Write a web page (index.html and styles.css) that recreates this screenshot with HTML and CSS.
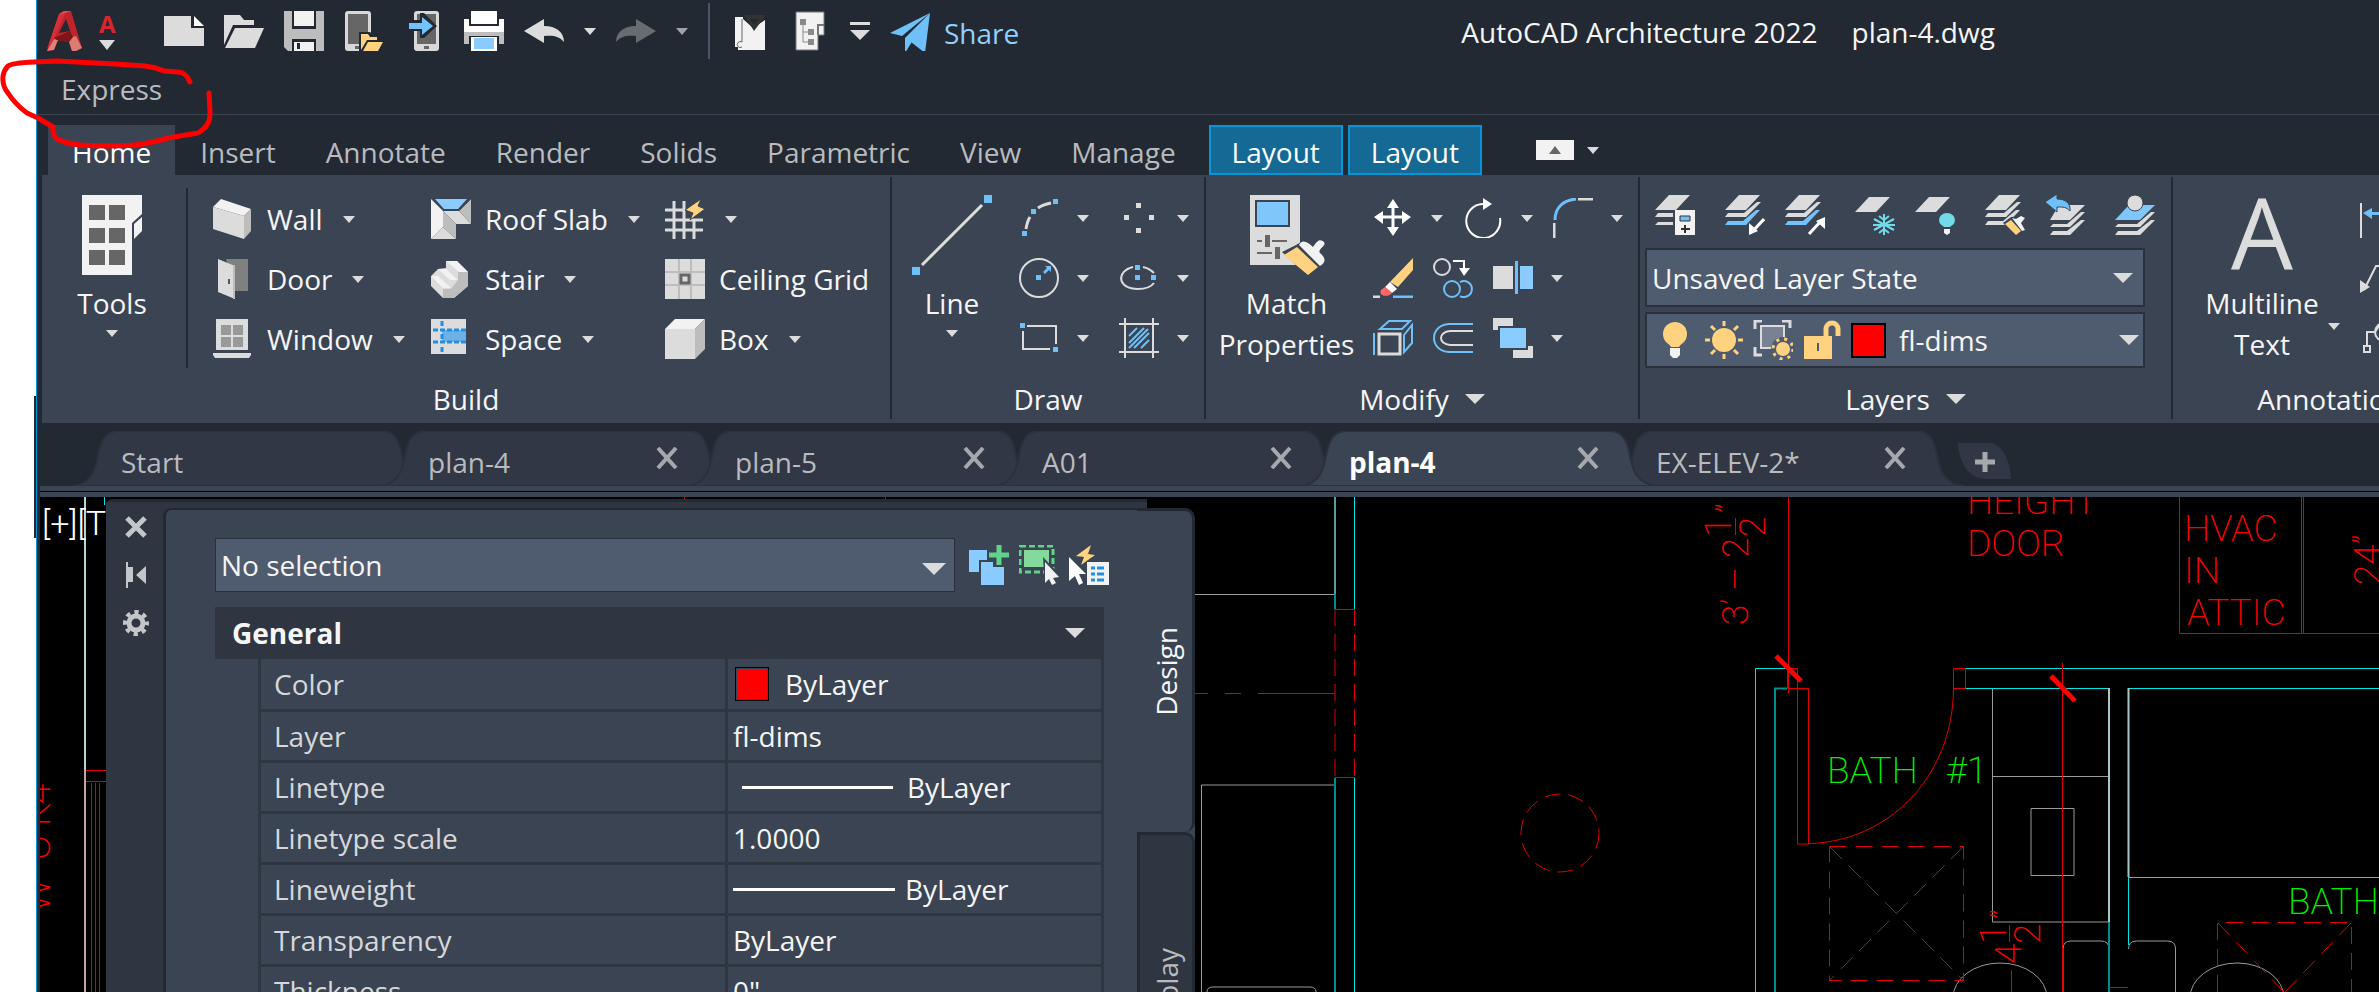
FILE: index.html
```html
<!DOCTYPE html>
<html lang="en">
<head>
    <meta charset="UTF-8">
    <meta name="viewport" content="width=device-width, initial-scale=1.0">
    <title>AutoCAD Architecture 2022 - plan-4.dwg</title>
    <link rel="stylesheet" href="styles.css">
</head>
<body>

    <div class="app">
        <!-- Quick access toolbar -->
        <header class="titlebar">
            <button class="logo-btn" aria-label="Application menu">
                <svg class="logo" viewBox="0 0 36 40"><path d="M0 40 12 3 17 0h7l11 37-6 3h-4l-3-9-12-2-4 10z" fill="#c0232b"/><path d="M12 22l7-14 4 12z" fill="#222933"/><path d="M12 3l5-3h7l-8 3z" fill="#e8494c"/><path d="M0 40l7-12 4 1-4 10z" fill="#e28079"/><path d="M22 31l3-5 4-1 6 12-6 3h-4z" fill="#dc7a74"/><path d="M7 27l16-7 3 6-4 5-12-2z" fill="#7d1519"/><path d="M12 3h6L6 30 0 38z" fill="#d8303a"/></svg>
                <span class="logo-small"><b>A</b><i class="caret caret-md"></i></span>
            </button>
            <button class="icon-btn" aria-label="New"><svg viewBox="0 0 40 40"><path d="M0 5h27v12h13v18H0z" fill="#dcdcdc"/><path d="M30 5l10 10H30z" fill="#fff"/></svg></button>
            <button class="icon-btn" aria-label="Open"><svg viewBox="0 0 40 40"><path d="M0 4h16l4 5h10v5H9L0 34z" fill="#dcdcdc"/><path d="M11 17h29l-9 20H1z" fill="#dcdcdc"/></svg></button>
            <button class="icon-btn" aria-label="Save"><svg viewBox="0 0 40 40"><path d="M0 0h40v40H4l-4-4z" fill="#bdbdbd"/><path d="M8 0h24v18H8zM8 28h24v12H8z" fill="#222933"/><path d="M10 0h20v15H10zM10 31h20v9H10z" fill="#f2f2f2"/><path d="M13 32h3v6h-3z" fill="#222933"/></svg></button>
            <button class="icon-btn" aria-label="Open from web"><svg viewBox="0 0 40 40"><rect x="1" width="26" height="40" rx="3" fill="#d9d9d9"/><path d="M4 3h20v30H4z" fill="#666"/><path d="M11 35h5v3h-5z" fill="#666"/><path d="M15 40V21h11l3 3h6v5h3l-5 11z" fill="#222933"/><path d="M17 23h7l2 3h7v3H23l-6 10z" fill="#ffd27f"/><path d="M24 31h15l-5 9H19z" fill="#ffd27f"/></svg></button>
            <button class="icon-btn" aria-label="Save to web"><svg viewBox="0 0 40 40"><rect x="10" width="25" height="40" rx="3" fill="#d9d9d9"/><path d="M13 3h19v30H13z" fill="#666"/><path d="M3 9h13V2h4l13 13-13 12h-4v-7H3z" fill="#222933"/><path d="M5 12h13V6l11 9-11 9v-6H5z" fill="#73c2fb"/><path d="M20 35h5v3h-5z" fill="#666"/></svg></button>
            <button class="icon-btn" aria-label="Plot"><svg viewBox="0 0 40 40"><path d="M7 0h26v13H7z" fill="#fff"/><path d="M0 8h5v7h30V8h5v13H0z" fill="#fff"/><path d="M0 21h40v12h-5v-8H5v8H0z" fill="#bdbdbd"/><path d="M7 26h26v14H7z" fill="#fff"/><path d="M10 27h20v11H10z" fill="#8accff"/></svg></button>
            <button class="icon-btn" aria-label="Undo"><svg viewBox="0 0 40 40"><path d="M0 20L20 8v7c12 0 20 6 20 16-5-6-11-7-20-6v7z" fill="#dcdcdc"/></svg></button>
            <i class="caret"></i>
            <button class="icon-btn" aria-label="Redo"><svg viewBox="0 0 40 40"><path d="M40 20L20 8v7C8 15 0 21 0 31c5-6 11-7 20-6v7z" fill="#686b70"/></svg></button>
            <i class="caret dim"></i>
            <span class="bar-sep"></span>
            <button class="icon-btn" aria-label="Project navigator"><svg viewBox="0 0 40 40"><path d="M5 6h8v30H5zM13 8l10 9 12-8v30H8V30h5z" fill="#f2f2f2"/><path d="M14 4h22L24 20z" fill="#333"/><path d="M20 8h9l-5 6z" fill="#222933"/><path d="M12 8v23a3 3 0 1 0 0 5" fill="none" stroke="#666"/></svg></button>
            <button class="icon-btn" aria-label="Project browser"><svg viewBox="0 0 40 40"><path d="M6 1h28v23h-6v15H6z" fill="#f2f2f2" stroke="#777"/><path d="M28 24V14h6" fill="none" stroke="#777" stroke-width="2"/><path d="M10 8h6v6h-6zM18 18h6v6h-6zM18 28h6v6h-6z" fill="#8a8a8a"/><path d="M13 14v17h5M13 21h5" fill="none" stroke="#8a8a8a"/></svg></button>
            <button class="more-btn" aria-label="Customize"><span></span><i class="caret caret-lg"></i></button>
            <button class="share-btn"><svg viewBox="0 0 40 40"><path d="M0 22L40 2 12 25zM15 27L40 2 15 42zM21 31L40 2 35 42z" fill="#6fc0f8"/></svg><span>Share</span></button>
            <div class="title"><span>AutoCAD Architecture 2022</span><span>plan-4.dwg</span></div>
        </header>
        <nav class="menubar"><a href="#">Express</a></nav>

        <!-- Ribbon tabs -->
        <nav class="tabs">
            <a href="#" class="active">Home</a>
            <a href="#">Insert</a>
            <a href="#">Annotate</a>
            <a href="#">Render</a>
            <a href="#">Solids</a>
            <a href="#">Parametric</a>
            <a href="#">View</a>
            <a href="#">Manage</a>
            <div class="context-tabs">
                <a href="#">Layout</a>
                <a href="#">Layout</a>
            </div>
            <button class="minimize" aria-label="Minimize ribbon"><span></span><i class="caret"></i></button>
        </nav>

        <!-- Ribbon panels -->
        <main class="ribbon">
            <section class="panel">
                <div class="panel-body">
                    <button class="big tools"><svg viewBox="0 0 80 80"><path d="M10 0h60v19l-10 9v52H10z" fill="#f2f2f2"/><path d="M62 29l8-7v14l-8 8z" fill="#f2f2f2"/><path d="M17 10h16v15H17zM37 10h16v15H37zM17 33h16v15H17zM37 33h16v15H37zM17 55h16v15H17zM37 55h16v15H37z" fill="#666"/></svg>Tools<i class="caret"></i></button>
                    <span class="inner-sep"></span>
                    <div class="build-grid">
                        <button class="tool"><svg viewBox="0 0 40 40"><path d="M0 8L8 0l30 10-7 7z" fill="#f2f2f2"/><path d="M0 8l31 9v23L0 30z" fill="#dcdcdc"/><path d="M31 17l7-7v22l-7 8z" fill="#bdbdbd"/></svg>Wall<i class="caret"></i></button>
                        <button class="tool"><svg viewBox="0 0 40 40"><path d="M0 0l12 12v16L0 40z" fill="#f2f2f2"/><path d="M12 28l13 12H0z" fill="#dcdcdc"/><path d="M12 12h16l12 13H25z" fill="#dcdcdc"/><path d="M12 12l13 13v15L12 28z" fill="#bdbdbd"/><path d="M40 0v25L28 12z" fill="#bdbdbd"/><path d="M1 0h39L28 12H13z" fill="#3b4453"/><path d="M4 0h32l-9 10H13z" fill="#8accff"/></svg>Roof Slab<i class="caret"></i></button>
                        <button class="tool" aria-label="Column grid"><svg viewBox="0 0 40 40"><path d="M9 2v38M19 2v38M29 20v20M0 11h18M0 21h38M0 31h38" stroke="#dcdcdc" stroke-width="3"/><path d="M36 0L20 11l8 3-3 7 15-11-7-3z" fill="#ffd27f" stroke="#3b4453"/></svg><i class="caret"></i></button>
                        <button class="tool"><svg viewBox="0 0 40 40"><path d="M13 0h22v32H22z" fill="#808080"/><path d="M5 0l17 7v33L5 33z" fill="#dcdcdc"/><path d="M20 6h2v34h-2z" fill="#bdbdbd"/><path d="M15 20h2v5h-2z" fill="#555"/></svg>Door<i class="caret"></i></button>
                        <button class="tool"><svg viewBox="0 0 40 40"><path d="M15 2h11l11 11v14L23 39H12L0 27V17l7-7 8-1z" fill="#dcdcdc"/><path d="M37 13v14L23 39H12v-9h8l7-9v-8z" fill="#bdbdbd"/><path d="M15 2h11l11 11h-9zM7 10h8l12 11h-8zM0 17h7l13 12h-8z" fill="#f2f2f2"/></svg>Stair<i class="caret"></i></button>
                        <button class="tool"><svg viewBox="0 0 40 40"><path d="M0 0h40v40H0z" fill="#dcdcdc"/><path d="M14 0v40M26 0v40M0 13h40M0 26h40" stroke="#bdbdbd" stroke-width="2"/><path d="M16 16h8v8h-8z" fill="#dcdcdc" stroke="#666" stroke-width="3"/></svg>Ceiling Grid</button>
                        <button class="tool"><svg viewBox="0 0 40 40"><path d="M3 0h32v31H3zM0 34h38v2l-2 3H2l-2-3z" fill="#dcdcdc"/><path d="M8 6h10v10H8zM20 6h10v10H20zM8 18h10v10H8zM20 18h10v10H20z" fill="#999"/></svg>Window<i class="caret"></i></button>
                        <button class="tool"><svg viewBox="0 0 40 40"><path d="M0 0h35v35H0z" fill="#dcdcdc"/><path d="M11 11h24v12H11z" fill="#6db1e6"/><path d="M2 11h33M2 23h33" stroke="#1f8fe6" stroke-width="3" stroke-dasharray="5 2"/><path d="M11 2v31" stroke="#1f8fe6" stroke-width="3" stroke-dasharray="5 8"/></svg>Space<i class="caret"></i></button>
                        <button class="tool"><svg viewBox="0 0 40 40"><path d="M0 10L10 0h30L30 10z" fill="#f2f2f2"/><path d="M0 10h30v30H0z" fill="#dcdcdc"/><path d="M30 10L40 0v30L30 40z" fill="#bdbdbd"/></svg>Box<i class="caret"></i></button>
                    </div>
                </div>
                <h2>Build</h2>
            </section>

            <section class="panel">
                <div class="panel-body">
                    <button class="big line"><svg viewBox="0 0 80 80"><path d="M10 70L70 10" stroke="#dcdcdc" stroke-width="3"/><path d="M0 72h8v8H0zM72 0h8v8h-8z" fill="#6fc0f8"/></svg>Line<i class="caret"></i></button>
                    <div class="draw-grid">
                        <button class="tool" aria-label="Arc"><svg viewBox="0 0 40 40"><path d="M7 31C8 25 9 22 11 19M19 10C23 7 27 6 32 5" fill="none" stroke="#dcdcdc" stroke-width="3"/><path d="M3 33h5v5H3zM12 11h5v5h-5zM34 1h5v5h-5z" fill="#6fc0f8"/></svg><i class="caret"></i></button>
                        <button class="tool" aria-label="Point"><svg viewBox="0 0 40 40"><path d="M17 5h5v5h-5zM5 17h5v5H5zM30 17h5v5h-5zM17 30h5v5h-5z" fill="#dcdcdc"/></svg><i class="caret"></i></button>
                        <button class="tool" aria-label="Circle"><svg viewBox="0 0 40 40"><circle cx="20" cy="20" r="19" fill="none" stroke="#dcdcdc" stroke-width="2"/><path d="M17 17h5v5h-5zM24 14l4-4-2-2h6v6l-2-2-4 4z" fill="#6fc0f8"/></svg><i class="caret"></i></button>
                        <button class="tool" aria-label="Ellipse"><svg viewBox="0 0 40 40"><path d="M14 9C-3 13-2 31 19 31c8 0 13-2 16-6M24 9c5 1 8 3 11 6" fill="none" stroke="#dcdcdc" stroke-width="2"/><path d="M16 7h5v5h-5zM16 17h5v5h-5zM32 17h5v5h-5z" fill="#6fc0f8"/></svg><i class="caret"></i></button>
                        <button class="tool" aria-label="Rectangle"><svg viewBox="0 0 40 40"><path d="M8 8h29v18M31 31H4V13" fill="none" stroke="#dcdcdc" stroke-width="2"/><path d="M1 5h5v5H1zM34 29h5v5h-5z" fill="#6fc0f8"/></svg><i class="caret"></i></button>
                        <button class="tool" aria-label="Hatch"><svg viewBox="0 0 40 40"><path d="M6 0v40M34 0v40M0 6h40M0 34h40" stroke="#dcdcdc" stroke-width="2"/><path d="M10 18l8-8M10 25l15-15M10 30l19-19M15 30l15-15M22 30l8-8" stroke="#6fc0f8" stroke-width="2"/></svg><i class="caret"></i></button>
                    </div>
                </div>
                <h2>Draw</h2>
            </section>

            <section class="panel">
                <div class="panel-body">
                    <button class="big match"><svg viewBox="0 0 80 80"><path d="M3 0h50v70H3z" fill="#dcdcdc"/><path d="M9 6h33v25H9z" fill="#7fc6fb" stroke="#3b4453" stroke-width="2"/><path d="M10 46h5M25 46h15M10 58h15" stroke="#666" stroke-width="2"/><path d="M18 40h5v12h-5zM28 52h5v12h-5z" fill="#666"/><path d="M35 57l14-7 12-7 18 4v22L62 82z" fill="#3b4453"/><path d="M37 60l13-8 21 20-10 8z" fill="#ffd27f"/><path d="M52 50c3-6 8-4 14 2 6-9 8-7 11-5 3 4-7 7-4 11 7 6 5 10 0 13z" fill="#f2f2f2"/></svg><span>Match</span><span>Properties</span></button>
                    <div class="modify-rows">
                        <div class="tool-row">
                            <button class="tool" aria-label="Move"><svg viewBox="0 0 40 40"><path d="M7 19h26M20 7v26" stroke="#fff" stroke-width="3"/><path d="M20 1l6 9H14zM20 38l6-9H14zM1 19l9-6v13zM38 19l-9-6v13z" fill="#fff"/></svg><i class="caret"></i></button>
                            <button class="tool" aria-label="Rotate"><svg viewBox="0 0 40 40"><path d="M20 6A17 17 0 1 0 37 20" fill="none" stroke="#fff" stroke-width="2"/><path d="M20 0l9 6-9 6z" fill="#fff"/></svg><i class="caret"></i></button>
                            <button class="tool" aria-label="Fillet"><svg viewBox="0 0 40 40"><path d="M2 22C2 9 11 2 23 1" fill="none" stroke="#6fc0f8" stroke-width="3"/><path d="M25 1h15M1 25v15" stroke="#dcdcdc" stroke-width="3"/></svg><i class="caret"></i></button>
                        </div>
                        <div class="tool-row">
                            <button class="tool" aria-label="Erase"><svg viewBox="0 0 40 40"><path d="M17 24L40 0v12L25 29z" fill="#ffd27f"/><path d="M12 29l5-5 7 7-5 4z" fill="#fff"/><path d="M8 32l4-3 7 6c-4 5-14 3-11-3z" fill="#f66"/><path d="M0 39h7" stroke="#dcdcdc" stroke-width="3"/><path d="M20 39h20" stroke="#6fc0f8" stroke-width="3"/></svg></button>
                            <button class="tool" aria-label="Copy"><svg viewBox="0 0 40 40"><circle cx="9" cy="9" r="8" fill="none" stroke="#dcdcdc" stroke-width="2"/><path d="M20 3h11v9" fill="none" stroke="#fff" stroke-width="2"/><path d="M26 10h11l-6 8z" fill="#fff"/><circle cx="19" cy="31" r="8" fill="none" stroke="#6fc0f8" stroke-width="2"/><path d="M27 24a8 8 0 1 1 0 14" fill="none" stroke="#6fc0f8" stroke-width="2"/></svg></button>
                            <button class="tool" aria-label="Mirror"><svg viewBox="0 0 40 40"><path d="M0 8h20v23H0z" fill="#dcdcdc"/><path d="M22 3h3v33h-3z" fill="#6fc0f8"/><path d="M27 8h13v23H27z" fill="#8accff"/></svg><i class="caret"></i></button>
                        </div>
                        <div class="tool-row">
                            <button class="tool" aria-label="Explode"><svg viewBox="0 0 40 40"><path d="M6 16h21v20H6z" fill="none" stroke="#dcdcdc" stroke-width="3"/><path d="M7 11l9-8h21l-8 8zM31 17l8-10v18l-8 9zM1 15v22" fill="none" stroke="#6fc0f8" stroke-width="2"/></svg></button>
                            <button class="tool" aria-label="Offset"><svg viewBox="0 0 40 40"><path d="M40 6H16C-4 7-4 33 16 34h24" fill="none" stroke="#6fc0f8" stroke-width="2"/><path d="M40 13H17c-12 1-12 13 0 14h23" fill="none" stroke="#dcdcdc" stroke-width="2"/></svg></button>
                            <button class="tool" aria-label="Draw order"><svg viewBox="0 0 40 40"><path d="M0 0h20v8H5v4H0zM40 40H20v-8h15v-4h5z" fill="#dcdcdc"/><path d="M7 10h26v20H7z" fill="#8accff"/></svg><i class="caret"></i></button>
                        </div>
                    </div>
                </div>
                <h2>Modify<i class="caret caret-lg"></i></h2>
            </section>

            <section class="panel">
                <div class="panel-body layers">
                    <div class="layer-icons">
                        <button class="icon-btn" aria-label="Layer properties"><svg viewBox="0 0 40 40"><path d="M14 0h21L21 15H0zM3 18h15v4H0zM3 27h15v3H0z" fill="#dcdcdc"/><path d="M20 15h20v25H20z" fill="#f2f2f2"/><path d="M25 21h10v5H25z" fill="#6fc0f8" stroke="#333"/><path d="M26 34h9M30 30v8" stroke="#333" stroke-width="2"/></svg></button>
                        <button class="icon-btn" aria-label="Layer previous"><svg viewBox="0 0 40 40"><path d="M14 0h21L21 15H0zM32 7h4L21 22H0l3-4h16z" fill="#dcdcdc"/><path d="M31 15h4L21 30H0l3-4h15z" fill="#73c2fb"/><path d="M39 24L27 37" stroke="#fff" stroke-width="3"/><path d="M24 40v-12l9 8z" fill="#fff"/></svg></button>
                        <button class="icon-btn" aria-label="Layer next"><svg viewBox="0 0 40 40"><path d="M14 0h21L21 15H0zM32 7h4L21 22H0l3-4h16z" fill="#dcdcdc"/><path d="M31 15h4L21 30H0l3-4h15z" fill="#73c2fb"/><path d="M24 39l12-13" stroke="#fff" stroke-width="3"/><path d="M40 22v12l-9-8z" fill="#fff"/></svg></button>
                        <button class="icon-btn" aria-label="Layer freeze"><svg viewBox="0 0 40 40"><path d="M14 2h21L21 17H0z" fill="#dcdcdc"/><path d="M29 19v21M19 24l20 11M39 24L19 35M24 21l5 4 5-4M24 38l5-4 5 4M18 30h22" fill="none" stroke="#73dbe8" stroke-width="2"/></svg></button>
                        <button class="icon-btn" aria-label="Layer off"><svg viewBox="0 0 40 40"><path d="M14 2h21L21 17H0z" fill="#dcdcdc"/><ellipse cx="32" cy="25" rx="8" ry="7" fill="#73dbe8"/><path d="M27 29h10l-2 3h-6z" fill="#73dbe8"/><path d="M29 34h6v4l-3 2-3-2z" fill="#f2f2f2"/></svg></button>
                        <button class="icon-btn" aria-label="Match layer"><svg viewBox="0 0 40 40"><path d="M14 0h21L21 15H0zM32 7h4L21 22H0l3-4h16zM31 15h4L21 30H0l3-4h15z" fill="#dcdcdc"/><path d="M18 28l8-6 12-1 4 14-10 7z" fill="#3b4453"/><path d="M20 29l6-4 10 11-5 4z" fill="#ffd27f"/><path d="M27 23l4 1 5-3 4 2-4 5 4 7-3 1z" fill="#f2f2f2"/></svg></button>
                        <button class="icon-btn" aria-label="Previous layer state"><svg viewBox="0 0 40 40"><path d="M14 10h26L25 25H5zM36 17h4L25 32H5l3-3h14zM36 25h4L25 40H5l3-4h14z" fill="#dcdcdc"/><path d="M0 7l12-8v5c8 0 14 4 13 12-4-4-6-4-13-4v5z" fill="#6fc0f8" stroke="#3b4453"/></svg></button>
                        <button class="icon-btn" aria-label="Isolate layer"><svg viewBox="0 0 40 40"><path d="M14 10h26L25 25H0z" fill="#7fc6fb"/><circle cx="20" cy="8" r="8" fill="#dcdcdc" stroke="#3b4453"/><path d="M36 17h4L25 32H0l3-3h19zM36 25h4L25 40H0l3-4h19z" fill="#dcdcdc"/></svg></button>
                    </div>
                    <select class="combo layer-state" aria-label="Layer state"><option>Unsaved Layer State</option></select>
                    <div class="layer-box">
                        <svg viewBox="0 0 40 40"><circle cx="20" cy="14" r="12" fill="#ffd27f"/><path d="M11 20h18l-5 7h-8z" fill="#ffd27f"/><path d="M15 28h10v7l-3 3h-4l-3-3z" fill="#f2f2f2"/></svg>
                        <svg viewBox="0 0 40 40"><circle cx="20" cy="20" r="12" fill="#ffd27f"/><path d="M20 1v5M20 34v5M1 20h5M34 20h5M7 6l4 4M30 30l4 4M7 34l4-4M30 10l4-4" stroke="#ffd27f" stroke-width="3"/></svg>
                        <svg viewBox="0 0 40 40"><path d="M2 9V1h7M29 1h8v7M2 27v8h7" fill="none" stroke="#dcdcdc" stroke-width="3"/><path d="M8 6h23v22H8z" fill="#788292" stroke="#dcdcdc" stroke-width="2"/><circle cx="30" cy="29" r="12" fill="#4f5b6e"/><circle cx="30" cy="29" r="7" fill="#ffd27f"/><circle cx="30" cy="29" r="10" fill="none" stroke="#ffd27f" stroke-width="3" stroke-dasharray="3 5"/></svg>
                        <svg viewBox="0 0 40 40"><path d="M24 16V9a6 6 0 0 1 12 0v7" fill="none" stroke="#ffd27f" stroke-width="5"/><path d="M2 16h28v23H2z" fill="#ffd27f"/><path d="M15 23h2v8h-2z" fill="#4f5b6e"/></svg>
                        <span class="swatch"></span>
                        <select class="combo layer-name" aria-label="Layer"><option>fl-dims</option></select>
                    </div>
                </div>
                <h2>Layers<i class="caret caret-lg"></i></h2>
            </section>

            <section class="panel annotation">
                <div class="panel-body">
                    <button class="big multiline"><span class="big-a">A</span><span>Multiline</span><span>Text</span></button>
                    <i class="caret"></i>
                    <div class="draw-grid single">
                        <button class="tool" aria-label="Dimension"><svg viewBox="0 0 40 40"><path d="M1 5v35M39 5v35" stroke="#dcdcdc" stroke-width="2"/><path d="M3 15l9-5v4h27v3H12v4z" fill="#6fc0f8"/></svg></button>
                        <button class="tool" aria-label="Leader"><svg viewBox="0 0 40 40"><path d="M4 32L16 8h24" fill="none" stroke="#dcdcdc" stroke-width="2"/><path d="M0 35V22l10 7z" fill="#dcdcdc"/></svg></button>
                        <button class="tool" aria-label="Table"><svg viewBox="0 0 40 40"><path d="M7 28V14h8l6-9h19M4 28h6v6H4z" fill="none" stroke="#dcdcdc" stroke-width="2"/><circle cx="24" cy="14" r="9" fill="none" stroke="#dcdcdc" stroke-width="2"/></svg></button>
                    </div>
                </div>
                <h2>Annotation<i class="caret caret-lg"></i></h2>
            </section>
        </main>

        <!-- Open drawings -->
        <nav class="file-tabs">
            <a href="#" class="file-tab"><svg class="shape" viewBox="0 0 356 55" preserveAspectRatio="none"><path d="M0 55C20 53 23 35 25 25 28 8 33 0 46 0H308c13 0 18 8 21 25 2 10 5 28 27 30z"/></svg><span>Start</span></a>
            <a href="#" class="file-tab"><svg class="shape" viewBox="0 0 356 55" preserveAspectRatio="none"><path d="M0 55C20 53 23 35 25 25 28 8 33 0 46 0H308c13 0 18 8 21 25 2 10 5 28 27 30z"/></svg><span>plan-4</span><svg class="close" viewBox="0 0 22 22"><path d="M2 1l18 20M20 1L2 21"/></svg></a>
            <a href="#" class="file-tab"><svg class="shape" viewBox="0 0 356 55" preserveAspectRatio="none"><path d="M0 55C20 53 23 35 25 25 28 8 33 0 46 0H308c13 0 18 8 21 25 2 10 5 28 27 30z"/></svg><span>plan-5</span><svg class="close" viewBox="0 0 22 22"><path d="M2 1l18 20M20 1L2 21"/></svg></a>
            <a href="#" class="file-tab"><svg class="shape" viewBox="0 0 356 55" preserveAspectRatio="none"><path d="M0 55C20 53 23 35 25 25 28 8 33 0 46 0H308c13 0 18 8 21 25 2 10 5 28 27 30z"/></svg><span>A01</span><svg class="close" viewBox="0 0 22 22"><path d="M2 1l18 20M20 1L2 21"/></svg></a>
            <a href="#" class="file-tab current"><svg class="shape" viewBox="0 0 356 55" preserveAspectRatio="none"><path d="M0 55C20 53 23 35 25 25 28 8 33 0 46 0H308c13 0 18 8 21 25 2 10 5 28 27 30z"/></svg><span>plan-4</span><svg class="close" viewBox="0 0 22 22"><path d="M2 1l18 20M20 1L2 21"/></svg></a>
            <a href="#" class="file-tab"><svg class="shape" viewBox="0 0 356 55" preserveAspectRatio="none"><path d="M0 55C20 53 23 35 25 25 28 8 33 0 46 0H308c13 0 18 8 21 25 2 10 5 28 27 30z"/></svg><span>EX-ELEV-2*</span><svg class="close" viewBox="0 0 22 22"><path d="M2 1l18 20M20 1L2 21"/></svg></a>
            <button class="new-tab" aria-label="New drawing"><svg viewBox="0 0 54 36"><path d="M0 0h34c12 4 18 18 19 36H26C10 34 1 20 0 0z" fill="#313744"/><path d="M17 19h20M27 9v20" stroke="#a6a8ad" stroke-width="5"/></svg></button>
        </nav>

        <!-- Model space -->
        <div class="canvas">
            <svg class="plan" viewBox="40 497 2339 495">
                <g class="white">
                    <path d="M85 497v273" stroke="#b4d4d4" stroke-width="2"/>
                    <path d="M85 770v222" stroke="#c9a0a0" stroke-width="2"/>
                    <path d="M1195 594.500H1335M1335 785H1201.500V992M1207 992q0-5 6-5h97q6 0 6 5"/>
                    <path d="M1992.500 688V922H2109M1992.500 776.500H2109M2031 808.500h43v67h-43zM2128 877.500H2379"/>
                    <path d="M2063 992V949q0-8 8-8h30q8 0 8 8M2128.500 949q0-8 8-8h31q8 0 8 8v43"/>
                    <ellipse cx="2000" cy="998" rx="47" ry="35"/>
                    <ellipse cx="2237" cy="998" rx="47" ry="35"/>
                </g>
                <g class="cyan">
                    <path d="M104.500 497v8M1354.500 497V609M1354.500 778V992M1787 668.500H1755.500V992M1965 668.500H2379M2128 688.500H2379M2128.500 877V945M1965 688.500H2109"/>
                    <path d="M1335 594v15M1335 778V992M1787 688.500H1775V992M2109 922V992" stroke="#008f8f" stroke-width="2"/>
                    <path d="M1335 497v97" stroke="#5e9a98" stroke-width="2"/>
                    <path d="M2109 688V922M2128.500 688V877" stroke="#a3c8c8" stroke-width="2"/>
                </g>
                <g class="red">
                    <path d="M86 770.500h20M86 781.500h20M91.500 783V992M95.500 783V992M99.500 783V992M684.500 497v3M885.500 497v3"/>
                    <path d="M1335 609.500h20M1335 777.500h20M1195 693.500h13M1225 693.500h16M1258 693.500h77"/>
                    <path d="M1335 609V777M1354.500 609V777" stroke-dasharray="17 8"/>
                    <circle cx="1560" cy="833" r="39" stroke-dasharray="16 8"/>
                    <path d="M1788.500 497V693M1787.500 668.500h10V844h11V688.500h-21zM1953.500 668.500h12v20h-12zM1953.500 688C1953 780 1885 842 1809 843.500"/>
                    <path d="M2062.500 663V992M2011.500 970v22M2109 987.500h19M2179.500 497V633.500H2379M2301.500 497V633M2303.500 497V633"/>
                    <path d="M1829.500 846.500H1963.500V980.500H1829.500zM1830 847L1963 980M1963 847L1830 980M2217.500 992V922.500H2351.500V992M2218 923l66 69M2351 923l-66 69" stroke-dasharray="17 9"/>
                    <path d="M1776 656l25 25M2051 676l24 25" class="tick"/>
                    <path d="M1735.500 518v17M2009.500 925v17"/>
                </g>
                <g class="cad-text red-text">
                    <text x="1967" y="514">HEIGHT</text>
                    <text x="1967" y="556">DOOR</text>
                    <text x="2184" y="541">HVAC</text>
                    <text x="2184" y="583">IN</text>
                    <text x="2187" y="625">ATTIC</text>
                    <text transform="translate(2380 585) rotate(-90)">24”</text>
                    <text transform="translate(1748 625) rotate(-90)">3’</text>
                    <text transform="translate(1748 591) rotate(-90)">–</text>
                    <text transform="translate(1748 558) rotate(-90)">2</text>
                    <text transform="translate(1731 537) rotate(-90)">1</text>
                    <text transform="translate(1765 537) rotate(-90)">2</text>
                    <text transform="translate(1743 513) rotate(-90)">”</text>
                    <text transform="translate(2021 964) rotate(-90)">4</text>
                    <text transform="translate(2006 944) rotate(-90)">1</text>
                    <text transform="translate(2040 944) rotate(-90)">2</text>
                    <text transform="translate(2018 919) rotate(-90)">”</text>
                    <text transform="translate(50 912) rotate(-90)">W</text>
                    <text transform="translate(50 860) rotate(-90)">O</text>
                    <text transform="translate(50 826) rotate(-90)">K</text>
                    <text transform="translate(50 804) rotate(-90)">4</text>
                </g>
                <g class="cad-text green-text">
                    <text x="1827" y="783">BATH</text>
                    <text x="1946" y="783">#1</text>
                    <text x="2288" y="914">BATH</text>
                </g>
                <text class="view-text" x="42" y="535">[+][T</text>
            </svg>

            <!-- Properties palette -->
            <aside class="palette">
                <div class="palette-bar">
                    <button aria-label="Close"><svg viewBox="0 0 26 26"><path d="M4 4l18 18M22 4L4 22" stroke="#c4c6ca" stroke-width="5"/></svg></button>
                    <button aria-label="Auto-hide"><svg viewBox="0 0 26 26"><path d="M3 0h2v5h5v15H5v6H3zM23 4v18l-10-9z" fill="#c4c6ca"/></svg></button>
                    <button aria-label="Properties"><svg viewBox="0 0 26 26"><circle cx="13" cy="13" r="7" fill="none" stroke="#c4c6ca" stroke-width="5"/><circle cx="13" cy="13" r="11" fill="none" stroke="#c4c6ca" stroke-width="4" stroke-dasharray="4.300 4.340" stroke-dashoffset="2"/></svg></button>
                </div>
                <div class="palette-main">
                    <div class="palette-top">
                        <select class="combo selection" aria-label="Selection"><option>No selection</option></select>
                        <button class="icon-btn" aria-label="Toggle pickadd"><svg viewBox="0 0 40 40"><path d="M0 5h18v10H10v12H0z" fill="#8accff"/><path d="M12 17h12v5h11v18H12z" fill="#8accff"/><path d="M20 10h20M30 0v20" stroke="#5fd38a" stroke-width="5"/></svg></button>
                        <button class="icon-btn" aria-label="Select objects"><svg viewBox="0 0 40 40"><path d="M1 1h33v26H1z" fill="none" stroke="#5fd38a" stroke-width="3" stroke-dasharray="6 3"/><path d="M5 5h25v17H5z" fill="#84d99c"/><path d="M24 12l19 20-7 2 2 8H26z" fill="#3b4453"/><path d="M26 17l14 15-6 1 3 5-4 2-3-6-4 4z" fill="#f2f2f2"/></svg></button>
                        <button class="icon-btn" aria-label="Quick select"><svg viewBox="0 0 40 40"><path d="M0 12l17 17h-7l4 9-4 2-4-9-6 5z" fill="#fff"/><path d="M22 0L7 11l8 1-3 8 14-10-7-1z" fill="#ffd27f"/><path d="M18 17h22v23H18z" fill="#f2f2f2"/><path d="M22 23h4M28 23h7M22 29h4M28 29h7M22 35h4M28 35h7" stroke="#1f8fe6" stroke-width="3"/></svg></button>
                    </div>
                    <button class="group-head">General<i class="caret caret-lg"></i></button>
                    <table class="props">
                        <tr><th>Color</th><td><span class="swatch small"></span>ByLayer</td></tr>
                        <tr><th>Layer</th><td>fl-dims</td></tr>
                        <tr><th>Linetype</th><td><span class="stroke type"></span>ByLayer</td></tr>
                        <tr><th>Linetype scale</th><td>1.0000</td></tr>
                        <tr><th>Lineweight</th><td><span class="stroke weight"></span>ByLayer</td></tr>
                        <tr><th>Transparency</th><td>ByLayer</td></tr>
                        <tr><th>Thickness</th><td>0"</td></tr>
                    </table>
                </div>
                <div class="side-tabs">
                    <button class="side-tab on">Design</button>
                    <button class="side-tab">Display</button>
                </div>
            </aside>
        </div>
    </div>

    <!-- Markup drawn over the menu -->
    <svg class="markup" viewBox="0 0 220 160"><path d="M190 82Q186 72 178 72L164 71Q155 67 145 66L115 64 57 61 34 62Q12 63 8 66 4 70 3 76 2 86 8 93 15 104 27 113L38 118 53 127Q52 134 57 139 64 143 80 145 108 147 134 145 152 143 168 138L198 133Q206 128 208 123 210 120 210 112L209 93"/></svg>

</body>
</html>
```
FILE: styles.css
```css
/* Base Styles */
* {
    box-sizing: border-box;
}
body {
    margin: 0;
    height: 100vh;
    overflow: hidden;
    font-family: 'Segoe UI', 'Open Sans', 'Noto Sans', sans-serif;
    font-size: 28px;
    color: #f5f5f5;
    background: #fff linear-gradient(#222933, #222933) 34px 396px / 2px 142px no-repeat;
}
a {
    color: inherit;
    text-decoration: none;
}
button {
    padding: 0;
    border: none;
    background: none;
    color: inherit;
    font: inherit;
    cursor: pointer;
}
svg {
    display: block;
    flex: none;
}
.app {
    display: flex;
    flex-direction: column;
    height: 100vh;
    margin-left: 36px;
    border-left: 1px solid #0696d7;
    background-color: #222933;
    overflow: hidden;
}

/* Arrows */
.caret {
    flex: none;
    width: 0;
    height: 0;
    border: 6px solid transparent;
    border-top: 7px solid #dcdcdc;
    border-bottom: none;
}
.caret.dim {
    border-top-color: #a0a3a8;
}
.caret-md {
    border-width: 10px 8px 0;
}
.caret-lg {
    border-width: 10px 10px 0;
}

/* Title bar */
.titlebar {
    display: flex;
    align-items: center;
    gap: 20px;
    height: 62px;
    padding-left: 10px;
}
.icon-btn, .icon-btn svg {
    width: 40px;
    height: 40px;
}
.logo-btn {
    display: flex;
    align-items: center;
    gap: 16px;
    width: 97px;
}
.logo {
    width: 36px;
    height: 40px;
}
.logo-small {
    display: flex;
    flex-direction: column;
    align-items: center;
    gap: 4px;
    line-height: 24px;
    font-size: 24px;
    color: #d8262c;
}
.bar-sep {
    width: 2px;
    height: 56px;
    background-color: #4a566b;
}
.more-btn {
    display: flex;
    flex-direction: column;
    gap: 5px;
}
.more-btn span {
    width: 20px;
    height: 3px;
    background-color: #dcdcdc;
}
.share-btn {
    display: flex;
    align-items: center;
    gap: 14px;
    color: #8fd0ff;
}
.share-btn svg {
    width: 40px;
    height: 40px;
}
.share-btn span {
    padding-top: 3px;
}
.title {
    display: flex;
    flex: 1;
    justify-content: center;
    gap: 34px;
    padding: 2px 0 0 38px;
}
.menubar {
    height: 53px;
    padding: 8px 0 0 24px;
    line-height: 38px;
    color: #b9bbbe;
    border-bottom: 1px solid #3b4453;
}

/* Ribbon tabs */
.tabs {
    display: flex;
    height: 60px;
    padding: 10px 0 0 11px;
    line-height: 50px;
    color: #b9bbbe;
}
.tabs > a {
    padding: 2px 25px 0;
}
.tabs .active {
    padding: 2px 24px 0;
    color: #fff;
    background-color: #3b4453;
}
.context-tabs {
    display: flex;
    gap: 5px;
    margin-left: 8px;
    line-height: 46px;
    color: #fff;
}
.context-tabs a {
    padding: 2px 21px 0;
    background-color: #146a94;
    border: 2px solid #0696d7;
}
.minimize {
    display: flex;
    align-items: center;
    gap: 13px;
    margin-left: 54px;
}
.minimize span {
    display: grid;
    place-items: center;
    width: 38px;
    height: 20px;
    background-color: #f2f2f2;
}
.minimize span::before {
    content: "";
    border: 6px solid transparent;
    border-top: none;
    border-bottom: 8px solid #666;
}

/* Ribbon */
.ribbon {
    display: flex;
    margin-left: 5px;
    padding: 2px 0 4px;
    background-color: #3b4453;
    overflow: hidden;
}
.panel {
    display: flex;
    flex: none;
    flex-direction: column;
    border-right: 2px solid #222933;
}
.panel-body {
    display: flex;
    height: 204px;
    padding-right: 15px;
}
.panel h2 {
    display: flex;
    align-items: center;
    justify-content: center;
    gap: 16px;
    height: 38px;
    margin: 0;
    font-size: 28px;
    line-height: 36px;
    font-weight: 400;
    padding-bottom: 2px;
}
.big {
    display: flex;
    flex-direction: column;
    align-items: center;
    padding-top: 18px;
    line-height: 41px;
}
.big svg {
    width: 80px;
    height: 80px;
    margin-bottom: 8px;
}
.big .caret {
    margin-top: 6px;
}
.tools {
    width: 140px;
}
.line {
    width: 120px;
}
.match {
    width: 161px;
}
.inner-sep {
    width: 2px;
    height: 180px;
    margin: 11px 25px 0 4px;
    background-color: #222933;
}
.build-grid {
    display: grid;
    grid-template-columns: 218px 234px 210px;
    grid-auto-rows: 40px;
    gap: 20px 0;
    padding-top: 22px;
}
.tool {
    display: flex;
    align-items: center;
    gap: 14px;
}
.tool svg {
    width: 40px;
    height: 40px;
}
.tool .caret {
    margin-left: 4px;
}
.build-grid .caret {
    margin-left: 6px;
}
.draw-grid {
    display: grid;
    grid-template-columns: 70px 70px;
    grid-auto-rows: 40px;
    gap: 20px 30px;
    padding: 21px 0 0 7px;
}
.draw-grid.single {
    grid-template-columns: 40px;
    padding-left: 20px;
}
.modify-rows {
    display: flex;
    flex-direction: column;
    gap: 20px;
    padding: 21px 0 0 6px;
}
.tool-row {
    display: flex;
    gap: 20px;
}

/* Layers */
.layers {
    flex-direction: column;
    padding: 18px 16px 0 5px;
}
.layer-icons {
    display: flex;
    gap: 20px;
    padding-left: 10px;
    margin-bottom: 13px;
}
.layer-icons .icon-btn:nth-child(odd) {
    margin-right: 10px;
}
.combo {
    appearance: none;
    padding: 0 8px;
    border: 2px solid #2a313d;
    border-radius: 0;
    color: #f5f5f5;
    font: inherit;
    background: #4f5b6e url("data:image/svg+xml,%3Csvg xmlns='http://www.w3.org/2000/svg' width='20' height='10'%3E%3Cpath d='M0 0h20L10 10z' fill='%23dcdcdc'/%3E%3C/svg%3E") right 10px center no-repeat;
}
.layer-state {
    width: 500px;
    height: 59px;
    padding: 0 5px;
    margin-bottom: 5px;
}
.layer-box {
    display: flex;
    align-items: center;
    gap: 9px;
    width: 500px;
    height: 56px;
    padding-left: 8px;
    border: 2px solid #2a313d;
    background-color: #4f5b6e;
}
.layer-box svg {
    width: 40px;
    height: 40px;
}
.swatch {
    flex: none;
    width: 35px;
    height: 35px;
    background-color: #f00;
    border: 2px solid #000;
}
.layer-name {
    flex: 1;
    height: 52px;
    padding: 0 4px;
    border: none;
    background-position: right 4px center;
}

/* Annotation */
.annotation {
    width: 352px;
    overflow: hidden;
}
.multiline {
    margin-left: 30px;
    width: 118px;
}
.big-a {
    height: 88px;
    line-height: 72px;
    font-size: 98px;
    color: #dcdcdc;
}
.annotation .panel-body > .caret {
    margin: 146px 0 0 7px;
}

/* Drawing tabs */
.file-tabs {
    display: flex;
    height: 63px;
    padding: 8px 0 0 36px;
    color: #b9bbbe;
}
.file-tab {
    position: relative;
    display: flex;
    flex: none;
    align-items: center;
    justify-content: space-between;
    width: 356px;
    height: 55px;
    margin-right: -49px;
    padding: 6px 58px 0 48px;
}
.file-tab span {
    position: relative;
}
.shape {
    position: absolute;
    top: 0;
    left: 0;
    width: 100%;
    height: 100%;
    fill: #313744;
    stroke: #2b313d;
    stroke-width: 2px;
}
.current {
    z-index: 1;
    color: #fff;
    font-weight: 700;
}
.current .shape {
    fill: #3b4453;
}
.close {
    position: relative;
    width: 22px;
    height: 22px;
    margin-bottom: 8px;
    stroke: #a6a8ad;
    stroke-width: 4px;
}
.new-tab {
    margin: 4px 0 0 43px;
}
.new-tab svg {
    width: 54px;
    height: 36px;
}

/* Canvas */
.canvas {
    position: relative;
    flex: 1;
    min-height: 0;
    margin-left: 3px;
    border-top: 5px solid #3b4453;
    background-color: #000;
    overflow: hidden;
}
.canvas::before {
    content: "";
    display: block;
    height: 5px;
    background-color: #3b4453;
    border-top: 1px solid #000;
}
.plan {
    width: 100%;
    fill: none;
    stroke-width: 1px;
}
.white {
    stroke: #9a9a9a;
}
.cyan {
    stroke: #00e5e5;
}
.red {
    stroke: #e00000;
}
.red .tick {
    stroke: #f00;
    stroke-width: 5px;
}
.cad-text {
    font-family: Roboto, 'Open Sans', sans-serif;
    font-size: 37px;
    font-weight: 200;
}
.red-text {
    fill: #ff0000;
}
.green-text {
    fill: #00f000;
}
.view-text {
    font-family: Roboto, 'Open Sans', sans-serif;
    font-size: 34px;
    font-weight: 300;
    fill: #fff;
}

/* Properties palette */
.palette {
    position: absolute;
    top: 8px;
    bottom: 0;
    left: 66px;
    display: flex;
    width: 1089px;
    padding-top: 3px;
    border-radius: 6px 0 0 0;
    background:
        linear-gradient(#222933, #222933) 0 0 / 1041px 3px no-repeat,
        linear-gradient(#2f3541, #2f3541) 0 0 / 1041px 100% no-repeat;
    overflow: hidden;
}
.palette-bar {
    display: flex;
    flex: none;
    flex-direction: column;
    align-items: center;
    gap: 22px;
    width: 57px;
    padding: 12px 0 0 3px;
}
.palette-bar svg {
    width: 26px;
    height: 26px;
}
.palette-main {
    flex: 1;
    margin-top: 6px;
    padding: 28px 33px 0 49px;
    background-color: #3b4453;
    border: solid #222933;
    border-width: 2px 0 0 3px;
    border-radius: 8px 0 0 0;
}
.palette-top {
    display: flex;
    align-items: center;
    gap: 10px;
    margin-right: -5px;
    margin-bottom: 15px;
}
.selection {
    flex: 1;
    height: 54px;
    padding: 0 5px;
    margin-right: 4px;
    border: 1px solid #2a313d;
    background-size: 24px 12px;
    background-position: right 8px top 24px;
}
.group-head {
    display: flex;
    align-items: center;
    justify-content: space-between;
    width: 100%;
    height: 52px;
    padding: 0 19px 0 17px;
    font-weight: 700;
    background-color: #2f3541;
}
.props {
    width: 846px;
    margin-left: auto;
    border-collapse: collapse;
    table-layout: fixed;
}
.props th, .props td {
    height: 51px;
    padding: 0 0 0 13px;
    border: 3px solid #2f3541;
    border-top: none;
    text-align: left;
    font-weight: 400;
    line-height: 38px;
    color: #d5d7da;
    white-space: nowrap;
}
.props th {
    width: 467px;
}
.props td {
    padding-left: 5px;
    color: #f5f5f5;
}
.swatch.small {
    display: inline-block;
    width: 34px;
    height: 34px;
    margin: 0 16px 0 2px;
    vertical-align: -6px;
    border: 1px solid #000;
    box-shadow: inset 0 0 0 1px #3b4453;
}
.stroke {
    display: inline-block;
    height: 3px;
    background-color: #fff;
    vertical-align: 9px;
}
.type {
    width: 151px;
    margin: 0 14px 0 9px;
}
.weight {
    width: 162px;
    margin-right: 10px;
}
.side-tabs {
    display: flex;
    flex: none;
    flex-direction: column;
    width: 58px;
    margin-top: 6px;
    background-color: #3b4453;
    border-radius: 0 12px 0 0;
}
.side-tab {
    flex: none;
    height: 324px;
    padding-left: 2px;
    writing-mode: sideways-lr;
    border: 3px solid #222933;
    border-left: none;
    border-bottom: none;
    border-radius: 0 10px 10px 0;
    background-color: #3b4453;
}
.side-tab:not(.on) {
    border-left: 3px solid #222933;
    color: #b9bbbe;
    background-color: #2f3541;
}

/* Markup */
.markup {
    position: absolute;
    top: 0;
    left: 0;
    width: 220px;
    height: 160px;
    fill: none;
    stroke: #f00;
    stroke-width: 5px;
    stroke-linecap: round;
    stroke-linejoin: round;
    pointer-events: none;
}
```
